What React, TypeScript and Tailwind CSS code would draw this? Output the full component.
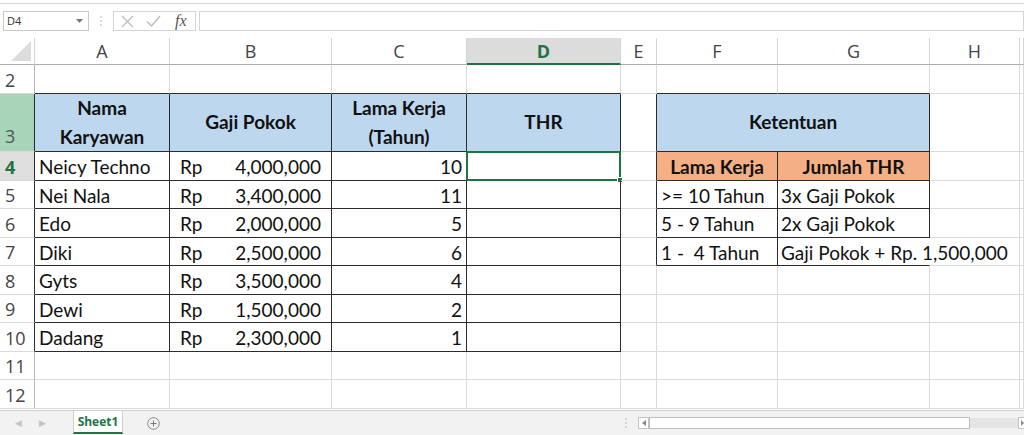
import React from 'react';

const cellFont = { fontFamily: 'Lato, "Noto Sans", sans-serif' };
const uiFont = { fontFamily: '"Open Sans", "Noto Sans", sans-serif' };

const COL_LABELS = ['A', 'B', 'C', 'D', 'E', 'F', 'G', 'H', ''];
const ROWS = [2, 3, 4, 5, 6, 7, 8, 9, 10, 11, 12];

const employees = [
    { name: 'Neicy Techno', gaji: '4,000,000', lama: '10' },
    { name: 'Nei Nala', gaji: '3,400,000', lama: '11' },
    { name: 'Edo', gaji: '2,000,000', lama: '5' },
    { name: 'Diki', gaji: '2,500,000', lama: '6' },
    { name: 'Gyts', gaji: '3,500,000', lama: '4' },
    { name: 'Dewi', gaji: '1,500,000', lama: '2' },
    { name: 'Dadang', gaji: '2,300,000', lama: '1' },
];

const rules = [
    { lama: '>= 10 Tahun', jumlah: '3x Gaji Pokok' },
    { lama: '5 - 9 Tahun', jumlah: '2x Gaji Pokok' },
    { lama: '1 -  4 Tahun', jumlah: 'Gaji Pokok + Rp. 1,500,000' },
];

// c: 1..9 (A..I)
const inMain = (r: number, c: number) => r >= 3 && r <= 10 && c >= 1 && c <= 4;
const inKet = (r: number, c: number) => r >= 3 && r <= 7 && c >= 6 && c <= 7;
const inTable = (r: number, c: number) => inMain(r, c) || inKet(r, c);

function cellContent(r: number, c: number): React.ReactNode {
    if (r === 3) {
        if (c === 1)
            return (
                <div className="flex h-full w-full flex-col items-center justify-end font-bold leading-[29px]">
                    <span>Nama</span>
                    <span>Karyawan</span>
                </div>
            );
        if (c === 2) return <div className="flex h-full items-center justify-center font-bold">Gaji Pokok</div>;
        if (c === 3)
            return (
                <div className="flex h-full w-full flex-col items-center justify-end font-bold leading-[29px]">
                    <span>Lama Kerja</span>
                    <span>(Tahun)</span>
                </div>
            );
        if (c === 4) return <div className="flex h-full items-center justify-center font-bold">THR</div>;
        if (c === 6) return <div className="flex h-full items-center justify-center font-bold">Ketentuan</div>;
    }
    if (r >= 4 && r <= 10) {
        const e = employees[r - 4];
        if (c === 1) return <div className="flex h-full items-center pl-[4px] pt-[3px]">{e.name}</div>;
        if (c === 2)
            return (
                <div className="flex h-full items-center justify-between pl-[10px] pr-[10px] pt-[3px]">
                    <span>Rp</span>
                    <span>{e.gaji}</span>
                </div>
            );
        if (c === 3) return <div className="flex h-full items-center justify-end pr-[4px] pt-[3px]">{e.lama}</div>;
    }
    if (r === 4) {
        if (c === 6) return <div className="flex h-full items-center justify-center pt-[3px] font-bold">Lama Kerja</div>;
        if (c === 7) return <div className="flex h-full items-center justify-center pt-[3px] font-bold">Jumlah THR</div>;
    }
    if (r >= 5 && r <= 7) {
        const k = rules[r - 5];
        if (c === 6) return <div className="flex h-full items-center whitespace-pre pl-[4px] pt-[3px]">{k.lama}</div>;
        if (c === 7) return <div className="flex h-full items-center whitespace-pre pl-[3px] pt-[3px]">{k.jumlah}</div>;
    }
    return null;
}

function Cell({ r, c }: { r: number; c: number }) {
    const darkR = (inTable(r, c) || inTable(r, c + 1)) && !(r === 7 && c === 7);
    const hideR = r === 7 && c === 7;
    const darkB = inTable(r, c) || inTable(r + 1, c);
    let bg = '';
    if (r === 3 && c >= 1 && c <= 4) bg = 'bg-[#bdd7ee]';
    if (r === 3 && c === 6) bg = 'bg-[#bdd7ee]';
    if (r === 4 && (c === 6 || c === 7)) bg = 'bg-[#f4b084]';
    const span = r === 3 && c === 6 ? 'col-span-2' : '';
    return (
        <div
            className={`relative overflow-visible border-r border-b text-[19px] text-[#111] ${bg} ${span} ${
                hideR ? 'border-r-transparent' : darkR ? 'border-r-[#2b2b2b]' : 'border-r-[#dadada]'
            } ${darkB ? 'border-b-[#2b2b2b]' : 'border-b-[#dadada]'}`}
            style={cellFont}
        >
            {cellContent(r, c)}
            {r === 4 && c === 4 && (
                <div className="absolute -left-[1px] -top-[1px] bottom-[-1px] right-[-1px] border-2 border-[#217346]">
                    <div className="absolute -bottom-[4px] -right-[4px] h-[6px] w-[6px] border border-white bg-[#217346]" />
                </div>
            )}
        </div>
    );
}

function RowHeader({ r }: { r: number }) {
    const darkR = inTable(r, 1);
    let cls = 'bg-white text-[#444]';
    if (r === 3) cls = 'bg-[#a8d5ba] text-[#555]';
    if (r === 4) cls = 'bg-[#dedede] text-[#217346] font-bold';
    return (
        <div
            className={`flex border-r border-b border-b-[#dadada] pl-[5px] text-[18px] ${cls} ${
                darkR ? 'border-r-[#2b2b2b]' : 'border-r-[#b5b5b5]'
            } ${r === 3 ? 'items-end pb-[1px]' : 'items-center pt-[3px]'}`}
            style={uiFont}
        >
            {r}
        </div>
    );
}

function Dots() {
    return (
        <svg width="2" height="10" viewBox="0 0 2 10">
            <circle cx="1" cy="1" r="0.8" fill="#aaa" />
            <circle cx="1" cy="5" r="0.8" fill="#aaa" />
            <circle cx="1" cy="9" r="0.8" fill="#aaa" />
        </svg>
    );
}

function FormulaBar() {
    return (
        <div className="flex h-[20px] items-stretch" style={uiFont}>
            <div className="ml-[3px] flex w-[86px] items-center justify-between border border-[#c8c8c8] bg-white pl-[3px] pr-[5px]">
                <span className="text-[11px] text-[#333]">D4</span>
                <svg width="7" height="4" viewBox="0 0 7 4">
                    <path d="M0 0 L7 0 L3.5 4 Z" fill="#777" />
                </svg>
            </div>
            <div className="flex w-[24px] items-center justify-center">
                <Dots />
            </div>
            <div className="flex w-[83px] items-center gap-[12px] border border-[#d4d4d4] bg-white pl-[7px]">
                <svg width="13" height="13" viewBox="0 0 13 13">
                    <path d="M1 1 L12 12 M12 1 L1 12" stroke="#bdbdbd" strokeWidth="1.3" fill="none" />
                </svg>
                <svg width="15" height="12" viewBox="0 0 15 12">
                    <path d="M1 6.5 L5.5 11 L14 1" stroke="#bdbdbd" strokeWidth="1.4" fill="none" />
                </svg>
                <span
                    className="ml-[2px] text-[16px] italic leading-none text-[#555]"
                    style={{ fontFamily: '"Liberation Serif", serif' }}
                >
                    fx
                </span>
            </div>
            <div className="ml-[3px] flex-1 border border-[#d4d4d4] bg-white" />
        </div>
    );
}

function BottomBar() {
    return (
        <div className="flex h-[25px] items-stretch border-t border-[#d0d0d0] bg-[#f2f2f2]" style={uiFont}>
            <div className="flex w-[73px] items-center gap-[17px] pl-[15px] text-[9px] text-[#c4c4c4]">
                <span>◀</span>
                <span>▶</span>
            </div>
            <div className="flex h-[23px] w-[50px] flex-col items-center justify-center border-x border-[#d0d0d0] border-b-2 border-b-[#217346] bg-white text-[12px] font-bold text-[#217346]">
                Sheet1
            </div>
            <div className="flex w-[60px] items-center justify-center">
                <svg width="13" height="13" viewBox="0 0 13 13">
                    <circle cx="6.5" cy="6.5" r="5.8" stroke="#888" strokeWidth="1" fill="none" />
                    <path d="M6.5 3.5 V9.5 M3.5 6.5 H9.5" stroke="#777" strokeWidth="1" />
                </svg>
            </div>
            <div className="flex-1" />
            <div className="flex w-[12px] items-center justify-center">
                <Dots />
            </div>
            <div className="flex w-[392px] items-center pl-[6px]">
                <div className="flex h-[12px] w-[11px] items-center justify-center border border-[#c4c4c4] bg-white">
                    <svg width="4" height="6" viewBox="0 0 4 6">
                        <path d="M4 0 L0 3 L4 6 Z" fill="#888" />
                    </svg>
                </div>
                <div className="h-[12px] w-[321px] border border-[#bdbdbd] bg-white" />
                <div className="h-[10px] flex-1 bg-[#e4e4e4]" />
                <div className="flex h-[12px] w-[6px] items-center justify-end border border-r-0 border-[#c4c4c4] bg-white">
                    <svg width="3" height="6" viewBox="0 0 3 6">
                        <path d="M0 0 L3 3 L0 6 Z" fill="#888" />
                    </svg>
                </div>
            </div>
        </div>
    );
}

export default function App() {
    return (
        <div className="h-[435px] w-[1024px] overflow-hidden bg-white">
            {/* ribbon edge */}
            <div className="h-[3px] bg-white" />
            <div className="h-[8px] border-t border-[#d6d6d6]" />
            <FormulaBar />
            <div className="h-[7px]" />

            {/* sheet grid */}
            <div className="grid grid-cols-[35px_135px_162px_135px_154px_36px_121px_152px_90px_1fr] grid-rows-[27px_29px_58px_repeat(9,28.5px)]">
                {/* column headers */}
                <div className="relative border-r border-b border-r-[#d4d4d4] border-b-[#ababab] bg-white">
                    <svg className="absolute bottom-[3px] right-[3px]" width="20" height="20" viewBox="0 0 20 20">
                        <path d="M20 0 L20 20 L0 20 Z" fill="#dcdcdc" />
                    </svg>
                </div>
                {COL_LABELS.map((l, i) =>
                    l === 'D' ? (
                        <div
                            key={i}
                            className="flex items-center justify-center border-r border-b-2 border-r-[#d4d4d4] border-b-[#217346] bg-[#dcdcdc] pt-[2px] text-[18px] font-bold text-[#217346]"
                            style={uiFont}
                        >
                            {l}
                        </div>
                    ) : (
                        <div
                            key={i}
                            className="flex items-center justify-center border-r border-b border-r-[#d4d4d4] border-b-[#ababab] bg-white text-[18px] text-[#444]"
                            style={uiFont}
                        >
                            {l}
                        </div>
                    )
                )}

                {ROWS.map((r) => (
                    <React.Fragment key={r}>
                        <RowHeader r={r} />
                        {[1, 2, 3, 4, 5, 6, 7, 8, 9].map((c) =>
                            r === 3 && c === 7 ? null : <Cell key={c} r={r} c={c} />
                        )}
                    </React.Fragment>
                ))}
            </div>

            <div className="h-[1.5px]" />
            <BottomBar />
        </div>
    );
}
